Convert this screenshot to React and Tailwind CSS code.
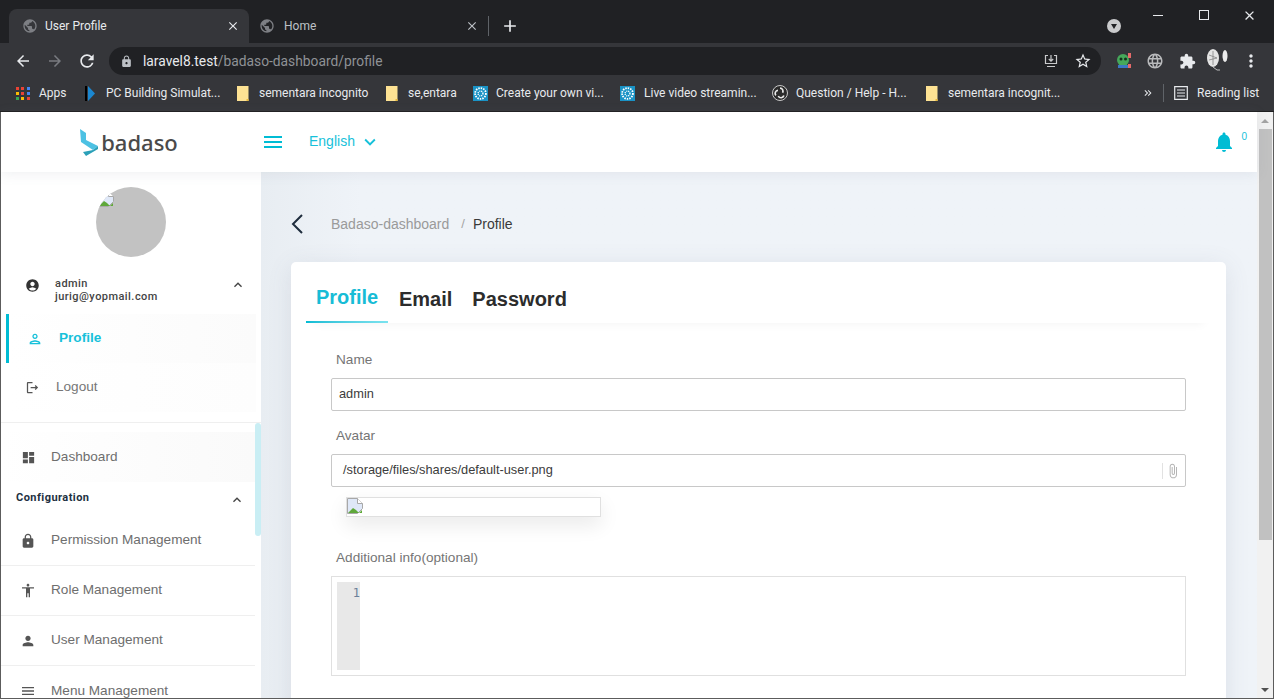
import React from "react";
import {
  MdArrowBack, MdArrowForward, MdRefresh, MdLock, MdClose, MdAdd, MdMoreVert, MdStarBorder, MdExtension,
  MdPublic, MdLanguage, MdDashboard, MdAccessibility, MdPerson, MdMenu, MdNotifications, MdAccountCircle,
  MdExpandLess, MdExpandMore, MdOutlinePerson, MdOutlineLogout, MdOutlineAttachFile, MdKeyboardDoubleArrowRight,
} from "react-icons/md";

const Folder = () => (
  <svg width="12" height="15" viewBox="0 0 12 15" className="shrink-0">
    <path d="M0 0h11.5v15H0z" fill="#fde293" />
    <path d="M9.5 15v-2h2v2z" fill="#e8b93c" />
  </svg>
);

const Burst = () => (
  <svg width="15" height="15" viewBox="0 0 15 15" className="shrink-0">
    <rect width="15" height="15" fill="#1a93c6" />
    <circle cx="7.5" cy="7.5" r="5.4" fill="none" stroke="#ffffff" strokeWidth="1.8" strokeDasharray="1.5 1" />
    <circle cx="7.5" cy="7.5" r="2.4" fill="none" stroke="#ffffff" strokeWidth="1.4" strokeDasharray="1 .8" />
  </svg>
);

const AppsIcon = () => {
  const c = ["#ea4335", "#ea4335", "#4285f4", "#fbbc04", "#ea4335", "#4285f4", "#34a853", "#fbbc04", "#ea4335"];
  return (
    <div className="grid grid-cols-3 gap-[2px] w-[14px] shrink-0">
      {c.map((x, i) => <div key={i} className="h-[3px] w-[3px]" style={{ background: x }} />)}
    </div>
  );
};

const PcIcon = () => (
  <svg width="10" height="15" viewBox="0 0 10 15" className="shrink-0">
    <rect width="2" height="15" fill="#000" />
    <path d="M3 0l7 7.5L3 15z" fill="#1b87d0" />
  </svg>
);

const ObsIcon = () => (
  <svg width="16" height="16" viewBox="0 0 16 16" className="shrink-0">
    <circle cx="8" cy="8" r="7.5" fill="#2b2b2b" stroke="#c9c9c9" />
    <path d="M8 3.2a3 3 0 0 1 2.6 4.5M3.9 10.4a3 3 0 0 1 2.1-5M11.9 10.6a3 3 0 0 1-5.6.4" fill="none" stroke="#e8e8e8" strokeWidth="1.7" />
  </svg>
);

const Bookmark = ({ icon, label, w, gap }) => (
  <div className={`flex items-center shrink-0 ${w} ${gap}`}>
    {icon}
    <span className="text-[12px] text-[#e8eaed] whitespace-nowrap">{label}</span>
  </div>
);

const BrokenImage = () => (
  <svg width="16" height="16" viewBox="0 0 16 16" className="shrink-0">
    <path d="M.5.5h10l5 5v5l-5 5H.5z" fill="#dfe8f8" stroke="#a8a8a8" />
    <path d="M1 15l5-5 3 2 3 3z" fill="#5fa83a" />
    <path d="M10.5.5v5h5" fill="#fff" stroke="#a8a8a8" />
    <path d="M12 15l3-3v3z" fill="#5fa83a" />
  </svg>
);

const Logo = () => (
  <div className="flex items-center">
    <svg width="20" height="27" viewBox="0 0 20 27" className="shrink-0">
      <path d="M0 0l6 4v7l12 6-5 4L1 13z" fill="#4dc1e3" />
      <path d="M18 17v3L6 27l-3-4 10-2z" fill="#2aa0b8" />
    </svg>
    <span className="ml-[1px] text-[22px] leading-none font-medium text-[#4a4a4a] pb-[1px] [font-family:'Noto_Sans',sans-serif]">badaso</span>
  </div>
);

const NavRow = ({ icon, label, bordered, active }) => (
  <div className={`flex items-center h-[50px] shrink-0 pl-[19px] mr-[6px] ${bordered ? "border-b border-[#efefef]" : ""} ${active ? "bg-gradient-to-r from-white to-[#fafafa]" : ""}`}>
    <span className="w-[16px] flex justify-center text-[#555]">{icon}</span>
    <span className="ml-[15px] text-[13.6px] text-[#6e6e6e] whitespace-nowrap">{label}</span>
  </div>
);

const Label = ({ children }) => <div className="pl-[5px] text-[13.6px] leading-[18px] text-[#757575]">{children}</div>;

export default function App() {
  return (
    <div className="w-[1274px] h-[699px] overflow-hidden flex flex-col bg-white [font-family:'Liberation_Sans',Arial,sans-serif]">
      {/* browser tab strip */}
      <div className="h-[43px] shrink-0 bg-[#202124] flex items-end pl-[9px] relative [font-family:Roboto,sans-serif]">
        <div className="w-[240px] h-[34px] bg-[#35363a] rounded-t-[8px] flex items-center pl-[13px] pr-[9px] shrink-0">
          <MdPublic size={16} className="text-[#7d7f84]" />
          <span className="ml-[7px] text-[12px] text-[#e8eaed]">User Profile</span>
          <MdClose size={14} className="ml-auto text-[#e8eaed]" />
        </div>
        <div className="w-[239px] h-[34px] flex items-center pl-[10px] pr-[9px] shrink-0">
          <MdPublic size={16} className="text-[#7d7f84]" />
          <span className="ml-[9px] text-[12px] text-[#bdc1c6]">Home</span>
          <MdClose size={14} className="ml-auto text-[#bdc1c6]" />
        </div>
        <div className="h-[34px] flex items-center shrink-0">
          <div className="w-px h-[20px] bg-[#5f6368]" />
          <MdAdd size={20} className="ml-[11px] text-[#e8eaed]" />
        </div>
        <div className="h-[34px] ml-auto flex items-center pr-[153px]">
          <div className="w-[14px] h-[14px] rounded-full bg-[#c9cacc] flex items-center justify-center">
            <svg width="6" height="5" viewBox="0 0 6 5"><path d="M0 0h6L3 5z" fill="#202124" /></svg>
          </div>
        </div>
        <div className="absolute top-0 right-0 h-[30px] flex items-center text-[#e8eaed] pr-[1px]">
          <div className="w-[46px] flex justify-center"><div className="w-[10px] h-px bg-[#e8eaed]" /></div>
          <div className="w-[45px] flex justify-center"><div className="w-[10px] h-[10px] border border-[#e8eaed]" /></div>
          <div className="w-[47px] flex justify-center"><MdClose size={15} /></div>
        </div>
      </div>

      {/* toolbar */}
      <div className="h-[37px] shrink-0 bg-[#35363a] flex items-start pt-[4px] pl-[14px] [font-family:Roboto,sans-serif]">
        <MdArrowBack size={18} className="mt-[5px] text-[#e8eaed]" />
        <MdArrowForward size={18} className="mt-[5px] ml-[14px] text-[#797b80]" />
        <MdRefresh size={20} className="mt-[4px] ml-[13px] text-[#e8eaed]" />
        <div className="ml-[12px] w-[992px] h-[28px] rounded-full bg-[#202124] flex items-center pl-[11px] pr-[9px]">
          <MdLock size={13} className="text-[#bdc1c6]" />
          <span className="ml-[10px] text-[13.8px] text-[#e8eaed]">laravel8.test<span className="text-[#8f9296]">/badaso-dashboard/profile</span></span>
          <svg width="14" height="14" viewBox="0 0 14 14" className="ml-auto text-[#c9cacc]">
            <path d="M4 1.5H1.5v8h11v-8H10M7 1v6M4.8 5L7 7.2 9.2 5M3 12.5h8" fill="none" stroke="currentColor" strokeWidth="1.2" />
          </svg>
          <MdStarBorder size={18} className="ml-[16px] text-[#e8eaed]" />
        </div>
        <div className="flex items-center h-[28px] ml-[15px] gap-0">
          <svg width="16" height="18" viewBox="0 0 16 18" className="shrink-0">
            <circle cx="7" cy="8" r="6" fill="#46a85a" />
            <circle cx="5" cy="7" r="1.5" fill="#14301c" />
            <circle cx="9.5" cy="7" r="1.5" fill="#14301c" />
            <rect x="2" y="13" width="10" height="3" fill="#3b78c4" />
            <rect x="12" y="1" width="3" height="5" fill="#e66a6a" />
            <rect x="12" y="12" width="3" height="4" fill="#e66a6a" />
          </svg>
          <MdLanguage size={18} className="ml-[14px] text-[#b9babc]" />
          <MdExtension size={17} className="ml-[15px] text-[#e8eaed]" />
          <svg width="26" height="24" viewBox="0 0 26 24" className="ml-[8px] shrink-0">
            <ellipse cx="9" cy="9" rx="6" ry="9" fill="#e4e4e4" />
            <path d="M9 2v14M5 6l8 3M5 11l8-2" stroke="#777" strokeWidth=".7" />
            <path d="M9 18l4 3h3" stroke="#bbb" fill="none" />
            <ellipse cx="21" cy="7" rx="2.5" ry="6" fill="#ececec" />
          </svg>
          <MdMoreVert size={20} className="ml-[11px] text-[#e8eaed]" />
        </div>
      </div>

      {/* bookmarks */}
      <div className="h-[32px] shrink-0 bg-[#35363a] flex items-start pl-[16px] pt-[2px] border-b border-[#1f1f20] [font-family:Roboto,sans-serif]">
        <div className="flex items-center h-[22px] w-full">
          <Bookmark icon={<AppsIcon />} label="Apps" w="w-[69px]" gap="gap-[9px]" />
          <Bookmark icon={<PcIcon />} label="PC Building Simulat..." w="w-[152px]" gap="gap-[11px]" />
          <Bookmark icon={<Folder />} label="sementara incognito" w="w-[149px]" gap="gap-[10px]" />
          <Bookmark icon={<Folder />} label="se,entara" w="w-[87px]" gap="gap-[10px]" />
          <Bookmark icon={<Burst />} label="Create your own vi..." w="w-[147px]" gap="gap-[8px]" />
          <Bookmark icon={<Burst />} label="Live video streamin..." w="w-[152px]" gap="gap-[9px]" />
          <Bookmark icon={<ObsIcon />} label="Question / Help - H..." w="w-[154px]" gap="gap-[8px]" />
          <Bookmark icon={<Folder />} label="sementara incognit..." w="w-[216px]" gap="gap-[10px]" />
          <MdKeyboardDoubleArrowRight size={12} className="text-[#e8eaed] shrink-0" />
          <div className="w-px h-[18px] bg-[#5f6368] ml-[9px] shrink-0" />
          <svg width="14" height="14" viewBox="0 0 14 14" className="ml-[10px] shrink-0 text-[#e8eaed]">
            <path d="M.7.7h12.6v12.6H.7zM3 4h8M3 7h8M3 10h8" fill="none" stroke="currentColor" strokeWidth="1.2" />
          </svg>
          <span className="ml-[9px] text-[12px] text-[#e8eaed] whitespace-nowrap">Reading list</span>
        </div>
      </div>

      {/* page viewport */}
      <div className="flex-1 min-h-0 flex border-l border-r border-b border-[#5c5c5c]">
        <div className="flex-1 min-w-0 flex flex-col relative">
          {/* app header */}
          <div className="h-[60px] shrink-0 bg-white flex items-center relative z-10 shadow-[0_2px_12px_rgba(120,130,150,0.12)]">
            <div className="w-[260px] shrink-0 flex justify-center pr-[2px]"><div className="ml-[-2px]"><Logo /></div></div>
            <svg width="18" height="12" viewBox="0 0 18 12" className="shrink-0 ml-[3px]">
              <path d="M0 1h18M0 6h18M0 11h18" stroke="#00bcd4" strokeWidth="2" />
            </svg>
            <span className="ml-[27px] text-[14px] text-[#17c1da] mb-[2px]">English</span>
            <MdExpandMore size={22} className="ml-[4px] text-[#17c1da]" />
            <div className="ml-auto mr-[10px] flex items-start">
              <MdNotifications size={24} className="text-[#00bcd4]" />
              <span className="ml-[5px] mt-[-1px] text-[10px] text-[#17c1da]">0</span>
            </div>
          </div>

          <div className="flex-1 min-h-0 flex">
            {/* sidebar */}
            <aside className="w-[260px] shrink-0 bg-white flex flex-col overflow-hidden relative">
              <div className="flex justify-center pt-[15px]">
                <div className="w-[70px] h-[70px] rounded-full bg-[#c2c2c2] overflow-hidden pl-[2px] pt-[4px]">
                  <BrokenImage />
                </div>
              </div>
              <div className="flex items-start mt-[20px] pl-[24px] pr-[16px]">
                <MdAccountCircle size={15} className="mt-[1px] text-[#333]" />
                <div className="ml-[15px] text-[11px] leading-[13px] font-medium text-[#444] tracking-[0.45px] [font-family:Roboto,sans-serif]">
                  <div>admin</div>
                  <div>jurig@yopmail.com</div>
                </div>
                <MdExpandLess size={16} className="ml-auto mr-[-1px] text-[#444]" />
              </div>
              <div className="mt-[11px] ml-[5px] mr-[5px] flex flex-col">
                <div className="h-[49px] flex items-center border-l-[3px] border-[#00bcd4] bg-gradient-to-r from-white to-[#fbfbfb]">
                  <MdOutlinePerson size={16} className="ml-[18px] text-[#17c1da]" />
                  <span className="ml-[16px] text-[13.6px] font-bold text-[#17c1da]">Profile</span>
                </div>
                <div className="h-[49px] flex items-center pl-[19px] bg-gradient-to-r from-white to-[#fdfdfd]">
                  <MdOutlineLogout size={15} className="text-[#555]" />
                  <span className="ml-[16px] text-[13.6px] text-[#767676]">Logout</span>
                </div>
              </div>
              <div className="mt-[10px] h-px bg-[#efefef] shrink-0" />
              <div className="mt-[9px] flex flex-col">
                <NavRow icon={<MdDashboard size={15} />} label="Dashboard" active />
                <div className="h-[33px] shrink-0 flex items-center pl-[15px] pr-[16px]">
                  <span className="text-[11px] font-bold text-[#22303f] tracking-[0.45px] [font-family:Roboto,sans-serif]">Configuration</span>
                  <MdExpandLess size={16} className="ml-auto mt-[3px] text-[#444]" />
                </div>
                <div className="h-[1px] shrink-0" />
                <NavRow icon={<MdLock size={16} />} label="Permission Management" bordered />
                <NavRow icon={<MdAccessibility size={17} />} label="Role Management" bordered />
                <NavRow icon={<MdPerson size={16} />} label="User Management" bordered />
                <NavRow icon={<MdMenu size={16} />} label="Menu Management" />
              </div>
              <div className="absolute right-0 top-[251px] w-[6px] h-[113px] rounded-[3px] bg-[#c9eef4]" />
            </aside>

            {/* main content */}
            <main className="flex-1 min-w-0 bg-gradient-to-r from-[#e8edf2] to-[#eff3f8] to-[10%] pl-[30px] pr-[31px] overflow-hidden">
              <div className="h-[90px] flex items-center">
                <svg width="12" height="20" viewBox="0 0 12 20" className="mt-[14px] shrink-0">
                  <path d="M11 1L2 10l9 9" fill="none" stroke="#1f2d3d" strokeWidth="2" />
                </svg>
                <span className="ml-[28px] mt-[14px] text-[14px] text-[#9a9a9a]">Badaso-dashboard</span>
                <span className="ml-[12px] mt-[14px] text-[13px] text-[#a5a5a5]">/</span>
                <span className="ml-[8px] mt-[14px] text-[14px] text-[#3a3a3a]">Profile</span>
              </div>
              <section className="bg-white rounded-[5px] shadow-[0_4px_25px_rgba(90,100,120,0.12)] h-[500px]">
                <div className="relative mx-[15px] h-[61px] flex items-start shadow-[0_8px_10px_-8px_rgba(0,0,0,0.06)]">
                  <div className="w-[82px] h-[61px] pt-[21px] pl-[10px] text-[20px] leading-[28px] font-bold text-[#17bcd6]">Profile</div>
                  <div className="ml-[11px] pt-[23px] text-[20px] leading-[28px] font-bold text-[#2c2c2c]">Email</div>
                  <div className="ml-[20px] pt-[23px] text-[20px] leading-[28px] font-bold text-[#2c2c2c]">Password</div>
                  <div className="absolute left-0 bottom-0 w-[82px] h-[2px] bg-gradient-to-r from-[#00bcd4] to-[#7be3ef]" />
                </div>
                <div className="px-[40px] pt-[28px]">
                  <Label>Name</Label>
                  <div className="mt-[9px] h-[33px] border border-[#c8c8c8] rounded-[2px] flex items-center pl-[7px] text-[12.8px] text-[#3c3c3c]"><span className="mb-[1px]">admin</span></div>
                  <div className="mt-[16px]"><Label>Avatar</Label></div>
                  <div className="mt-[9px] h-[33px] border border-[#c8c8c8] rounded-[2px] flex items-center pl-[11px] pr-[4px] text-[12.8px] text-[#3c3c3c]">
                    <span className="mb-[2px]">/storage/files/shares/default-user.png</span>
                    <div className="ml-auto w-px h-[16px] bg-[#e2e2e2]" />
                    <MdOutlineAttachFile size={16} className="ml-[2px] text-[#b5b5b5]" />
                  </div>
                  <div className="ml-[15px] mt-[10px] w-[255px] h-[20px] border border-[#e0e0e0] shadow-[0_8px_20px_rgba(0,0,0,0.09)] flex items-start">
                    <BrokenImage />
                  </div>
                  <div className="mt-[32px]"><Label>Additional info(optional)</Label></div>
                  <div className="mt-[9px] h-[100px] border border-[#e0e0e0] p-[5px]">
                    <div className="w-[23px] h-[88px] bg-[#e8e8e8] text-right text-[12px] leading-[22px] text-[#6b7f99] [font-family:'DejaVu_Sans_Mono',monospace]">1</div>
                  </div>
                </div>
              </section>
            </main>
          </div>
        </div>

        {/* scrollbar */}
        <div className="w-[16px] shrink-0 bg-[#f1f1f1] flex flex-col items-center">
          <div className="h-[17px] shrink-0 flex items-center justify-center">
            <svg width="8" height="4" viewBox="0 0 8 4"><path d="M0 4h8L4 0z" fill="#a3a3a3" /></svg>
          </div>
          <div className="w-[13px] h-[411px] shrink-0 bg-[#c1c1c1]" />
          <div className="mt-auto h-[17px] shrink-0 flex items-center justify-center">
            <svg width="8" height="4" viewBox="0 0 8 4"><path d="M0 0h8L4 4z" fill="#505050" /></svg>
          </div>
        </div>
      </div>
    </div>
  );
}
